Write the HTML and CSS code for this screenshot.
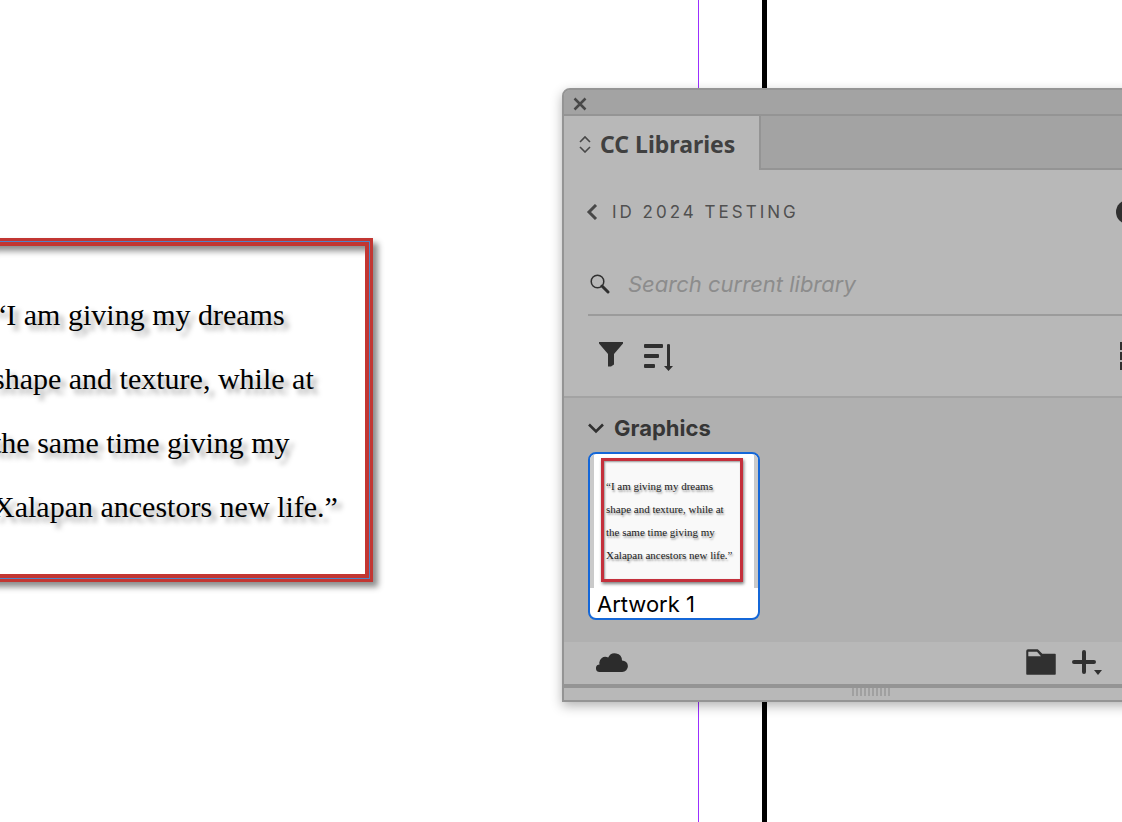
FILE: index.html
```html
<!DOCTYPE html>
<html lang="en">
<head>
    <meta charset="UTF-8">
    <meta name="viewport" content="width=device-width, initial-scale=1.0">
    <title>CC Libraries</title>
    <link rel="stylesheet" href="styles.css">
</head>
<body>
    <main class="canvas">
        <!-- Page edge and margin guide -->
        <div class="margin-guide"></div>
        <div class="page-edge"></div>

        <div class="text-frame">
            <p>“I am giving my dreams<br>shape and texture, while at<br>the same time giving my<br>Xalapan ancestors new life.”</p>
        </div>

        <section class="panel">
            <div class="title-bar">
                <button class="icon-btn" aria-label="Close">
                    <svg width="14" height="14" viewBox="0 0 14 14"><path d="M1.500 1.500l11 11M12.500 1.500l-11 11" stroke="#484848" stroke-width="2.500" fill="none"/></svg>
                </button>
            </div>

            <div class="tabs">
                <button class="tab">
                    <svg width="12" height="18" viewBox="0 0 12 18"><path d="M1 7l5-5 5 5M1 12l5 5 5-5" stroke="#484848" stroke-width="1.600" fill="none"/></svg>
                    CC Libraries
                </button>
                <div class="tab-fill"></div>
            </div>

            <div class="library-bar">
                <button class="icon-btn" aria-label="Back">
                    <svg width="12" height="16" viewBox="0 0 12 16"><path d="M10 1L3 8l7 7" stroke="#484848" stroke-width="3" fill="none"/></svg>
                </button>
                <h2>ID 2024 TESTING</h2>
                <button class="icon-btn push" aria-label="Library info">
                    <svg width="24" height="24" viewBox="0 0 24 24"><circle cx="12" cy="12" r="12" fill="#303030"/><circle cx="12" cy="6.500" r="1.500" fill="#b8b8b8"/><path d="M12 10v8" stroke="#b8b8b8" stroke-width="2.500"/></svg>
                </button>
            </div>

            <label class="search">
                <svg width="20" height="20" viewBox="0 0 20 20"><circle cx="7.500" cy="7.500" r="6.300" stroke="#303030" stroke-width="1.500" fill="none"/><path d="M12 12l6 6" stroke="#303030" stroke-width="3" stroke-linecap="round"/></svg>
                <input type="search" placeholder="Search current library" aria-label="Search current library">
            </label>

            <div class="tools">
                <button class="icon-btn" aria-label="Filter">
                    <svg width="26" height="30" viewBox="0 0 26 30"><path d="M1 1h24v1.500L16 13v10.500l-3 2h-3V13L1 2.500z" fill="#303030"/></svg>
                </button>
                <button class="icon-btn" aria-label="Sort">
                    <svg width="30" height="30" viewBox="0 0 30 30"><g fill="#303030"><rect x="0" y="3" width="19" height="4" rx="1"/><rect x="0" y="13" width="15" height="4" rx="1"/><rect x="0" y="23" width="11" height="4" rx="1"/><path d="M23 3.500q1.500-1 3 0V25h3l-4.500 5-4.500-5h3z"/></g></svg>
                </button>
                <button class="icon-btn push" aria-label="Grid view">
                    <svg width="28" height="28" viewBox="0 0 28 28"><path d="M0 0h8v8H0zM10 0h8v8h-8zM20 0h8v8h-8zM0 10h8v8H0zM10 10h8v8h-8zM20 10h8v8h-8zM0 20h8v8H0zM10 20h8v8h-8zM20 20h8v8h-8z" fill="#303030"/></svg>
                </button>
            </div>

            <div class="group">
                <button class="group-title">
                    <svg width="16" height="12" viewBox="0 0 16 12"><path d="M1 2.500l7 7 7-7" stroke="#303030" stroke-width="2.600" fill="none"/></svg>
                    Graphics
                </button>
                <figure class="card">
                    <div class="preview">
                        <div class="thumb">“I am giving my dreams<br>shape and texture, while at<br>the same time giving my<br>Xalapan ancestors new life.”</div>
                    </div>
                    <figcaption>Artwork 1</figcaption>
                </figure>
            </div>

            <div class="footer">
                <button class="icon-btn" aria-label="Creative Cloud">
                    <svg width="32" height="20" viewBox="0 0 32 20"><path d="M3.700 20a3.700 3.700 0 0 1-.1-7.400A6 6 0 0 1 12.200 5.600 7.200 7.200 0 0 1 26 8.400 5.800 5.800 0 0 1 26.200 20z" fill="#2c2c2c"/></svg>
                </button>
                <button class="icon-btn push" aria-label="New group">
                    <svg width="30" height="26" viewBox="0 0 30 26"><path d="M1 25V2q0-1 1-1h9.500L16 5.500h13V25z" fill="#303030" stroke="#303030" stroke-width="1.500" stroke-linejoin="round"/><path d="M2.300 2.800h8.700l4 4.500H2.300z" fill="#b8b8b8"/></svg>
                </button>
                <button class="icon-btn" aria-label="Add elements">
                    <svg width="30" height="26" viewBox="0 0 30 26"><path d="M12 3v20M2 13h20" stroke="#303030" stroke-width="4" stroke-linecap="round"/><path d="M22 21h8l-4 5z" fill="#303030"/></svg>
                </button>
            </div>
            <div class="grip-bar"><div class="grip"></div></div>
        </section>
    </main>
</body>
</html>
```

FILE: styles.css
```css
* {
    box-sizing: border-box;
}

body {
    margin: 0;
    background-color: #fff;
    font-family: Inter, sans-serif;
}

h2, p, figure {
    margin: 0;
}

button {
    border: none;
    padding: 0;
    background: none;
    font: inherit;
    cursor: pointer;
}

svg {
    display: block;
}

.canvas {
    position: relative;
    height: 100vh;
    overflow: hidden;
}

/* Items placed freely on the canvas */
.margin-guide {
    position: absolute;
    top: 0;
    bottom: 0;
    left: 698px;
    width: 1px;
    background-color: #9b30ff;
}

.page-edge {
    position: absolute;
    top: 0;
    bottom: 0;
    left: 762px;
    width: 5px;
    background-color: #000;
}

.text-frame {
    position: absolute;
    top: 238px;
    left: -20px;
    padding: 42px 27px 40px 10px;
    border: 3px solid #c23632;
    box-shadow: inset 0 0 0 1px #4f84c8,
                inset 0 0 0 5px #c23632,
                inset 10px 10px 6px rgba(0, 0, 0, 0.45),
                5px 5px 6px rgba(0, 0, 0, 0.45);
    width: 393px;
    font-family: "Liberation Serif", serif;
    font-size: 30px;
    line-height: 64px;
    color: #000;
    white-space: nowrap;
    text-shadow: 5px 5px 5px rgba(0, 0, 0, 0.35);
}

.panel {
    position: absolute;
    top: 88px;
    left: 562px;
    right: -40px;
    display: flex;
    flex-direction: column;
    border: 2px solid #949494;
    border-radius: 8px 8px 0 0;
    background-color: #b8b8b8;
    box-shadow: 0 4px 12px rgba(0, 0, 0, 0.3);
    overflow: hidden;
}

.title-bar {
    display: flex;
    align-items: center;
    height: 26px;
    padding: 4px 9px 0;
    border-bottom: 2px solid #949494;
    background-color: #a3a3a3;
}

.tabs {
    display: flex;
    height: 54px;
}

.tab {
    display: flex;
    align-items: center;
    gap: 9px;
    padding: 2px 24px 0 15px;
    color: #404040;
    font-family: "Noto Sans", sans-serif;
    font-size: 23px;
    font-weight: bold;
}

.tab-fill {
    flex: 1;
    border-left: 2px solid #949494;
    border-bottom: 2px solid #949494;
    background-color: #a3a3a3;
}

.push {
    margin-left: auto;
}

.library-bar {
    display: flex;
    align-items: center;
    gap: 14px;
    height: 84px;
    padding: 0 20px 0 22px;
}

.library-bar h2 {
    color: #505050;
    font-size: 17px;
    font-weight: normal;
    letter-spacing: 3px;
}

.search {
    display: flex;
    align-items: center;
    gap: 18px;
    height: 62px;
    margin: 0 12px 0 24px;
    padding-left: 2px;
    border-bottom: 2px solid #9b9b9b;
}

.search input {
    flex: 1;
    border: none;
    outline: none;
    padding: 0;
    background: none;
    font-family: inherit;
    font-size: 22px;
    font-style: italic;
}

.search input::placeholder {
    color: #8c8c8c;
}

.tools {
    display: flex;
    align-items: center;
    gap: 20px;
    height: 82px;
    padding: 0 12px 0 34px;
    border-bottom: 2px solid #a3a3a3;
}

.group {
    padding: 12px 24px 22px;
    background-color: #b0b0b0;
}

.group-title {
    display: flex;
    align-items: center;
    gap: 10px;
    height: 36px;
    margin-bottom: 6px;
    color: #363636;
    font-size: 22px;
    font-weight: bold;
}

.card {
    width: 172px;
    border: 2px solid #1467d8;
    border-radius: 8px;
    background-color: #fff;
    overflow: hidden;
}

.preview {
    height: 134px;
    padding: 4px 11px 6px 7px;
    border-left: 4px solid #cacaca;
    border-right: 4px solid #cacaca;
}

.thumb {
    height: 124px;
    padding: 14px 0 0 2px;
    border: 3px solid #c4303c;
    background-color: #f9f9f9;
    box-shadow: inset 1px 1px 2px rgba(0, 0, 0, 0.4),
                1px 2px 3px rgba(0, 0, 0, 0.5);
    color: #222;
    font-family: "Liberation Serif", serif;
    font-size: 11px;
    line-height: 23px;
    white-space: nowrap;
    text-shadow: 1px 2px 2px rgba(0, 0, 0, 0.4);
}

.card figcaption {
    height: 30px;
    padding-left: 7px;
    color: #000;
    font-size: 22px;
    line-height: 32px;
}

.footer {
    display: flex;
    align-items: center;
    gap: 16px;
    height: 42px;
    padding: 0 58px 2px 32px;
}

.grip-bar {
    display: flex;
    justify-content: center;
    height: 16px;
    padding-left: 18px;
    border-top: 4px solid #949494;
}

.grip {
    width: 38px;
    height: 8px;
    background: repeating-linear-gradient(to right, #a0a0a0 0 2px, transparent 2px 4px);
}
```
